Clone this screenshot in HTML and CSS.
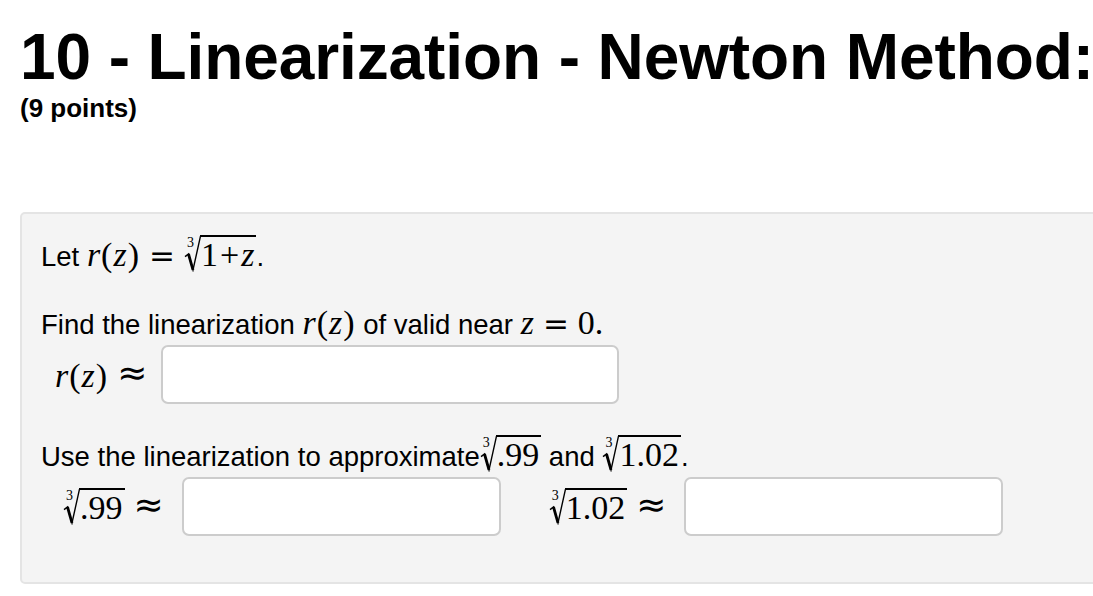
FILE: index.html
```html
<!DOCTYPE html>
<html lang="en">
<head>
    <meta charset="UTF-8">
    <meta name="viewport" content="width=device-width, initial-scale=1.0">
    <title>10 - Linearization - Newton Method</title>
    <link rel="stylesheet" href="styles.css">
</head>
<body>
    <div class="page">
        <h1 class="title">10 - Linearization - Newton Method:</h1>
        <div class="points">(9 points)</div>

        <div class="problem">
            <p class="q-text">Let <span class="math"><i>r</i><span class="paren">(</span><i>z</i><span class="paren">)</span><span class="rel">=</span><span class="root"><span class="root-idx">3</span><svg class="root-sign" viewBox="0 0 17 35" preserveAspectRatio="none"><path d="M1 20.5 L4.5 18 L9 33 L16.5 1" fill="none" stroke="#000" stroke-width="1.4"/><path d="M4.5 18 L9 33" fill="none" stroke="#000" stroke-width="2.8"/></svg><span class="root-body">1<span class="op">+</span><i>z</i></span></span></span>.</p>

            <p class="q-text q-gap">Find the linearization <span class="math"><i>r</i><span class="paren">(</span><i>z</i><span class="paren">)</span></span> of valid near <span class="math"><i>z</i><span class="rel">=</span>0.</span></p>
            <div class="answer-row row-one">
                <span class="math label label-r"><i>r</i><span class="paren">(</span><i>z</i><span class="paren">)</span><span class="approx">≈</span></span>
                <input type="text" class="answer wide">
            </div>

            <p class="q-text q-gap-lg">Use the linearization to approximate<span class="math"><span class="root"><span class="root-idx">3</span><svg class="root-sign" viewBox="0 0 17 35" preserveAspectRatio="none"><path d="M1 20.5 L4.5 18 L9 33 L16.5 1" fill="none" stroke="#000" stroke-width="1.4"/><path d="M4.5 18 L9 33" fill="none" stroke="#000" stroke-width="2.8"/></svg><span class="root-body">.99</span></span></span> and <span class="math"><span class="root"><span class="root-idx">3</span><svg class="root-sign" viewBox="0 0 17 35" preserveAspectRatio="none"><path d="M1 20.5 L4.5 18 L9 33 L16.5 1" fill="none" stroke="#000" stroke-width="1.4"/><path d="M4.5 18 L9 33" fill="none" stroke="#000" stroke-width="2.8"/></svg><span class="root-body">1.02</span></span></span>.</p>
            <div class="answer-row row-two">
                <span class="math label label-first"><span class="root"><span class="root-idx">3</span><svg class="root-sign" viewBox="0 0 17 35" preserveAspectRatio="none"><path d="M1 20.5 L4.5 18 L9 33 L16.5 1" fill="none" stroke="#000" stroke-width="1.4"/><path d="M4.5 18 L9 33" fill="none" stroke="#000" stroke-width="2.8"/></svg><span class="root-body">.99</span></span><span class="approx">≈</span></span>
                <input type="text" class="answer narrow">
                <span class="math label label-second"><span class="root"><span class="root-idx">3</span><svg class="root-sign" viewBox="0 0 17 35" preserveAspectRatio="none"><path d="M1 20.5 L4.5 18 L9 33 L16.5 1" fill="none" stroke="#000" stroke-width="1.4"/><path d="M4.5 18 L9 33" fill="none" stroke="#000" stroke-width="2.8"/></svg><span class="root-body">1.02</span></span><span class="approx">≈</span></span>
                <input type="text" class="answer narrow">
            </div>
        </div>
    </div>
</body>
</html>
```

FILE: styles.css
```css
body {
    margin: 0;
    padding: 0;
    background-color: #fff;
    color: #000;
    font-family: "Liberation Sans", Arial, sans-serif;
    overflow: hidden;
}
.page {
    padding: 25px 0 0 20px;
}
.title {
    margin: 0;
    font-size: 64px;
    line-height: 64px;
    font-weight: bold;
    letter-spacing: -0.1px;
    white-space: nowrap;
}
.points {
    margin-top: 6px;
    font-size: 26px;
    line-height: 26px;
    font-weight: bold;
}
.problem {
    margin-top: 91px;
    margin-right: -20px;
    padding: 21px 19px 46px;
    background-color: #f4f4f4;
    border: 2px solid #e4e4e4;
    border-radius: 5px;
}
.q-text {
    margin: 0;
    font-size: 27.5px;
    line-height: 40px;
    white-space: nowrap;
}
.q-gap {
    margin-top: 28px;
}
.q-gap-lg {
    margin-top: 31px;
}
.math {
    font-family: "Liberation Serif", "Times New Roman", serif;
    font-size: 34px;
    line-height: 1;
}
.math i {
    font-style: italic;
}
.paren {
    margin: 0 1px;
}
.op {
    margin: 0 2px;
}
.rel,
.approx {
    font-family: "DejaVu Sans", sans-serif;
    font-size: 31px;
}
.rel {
    margin: 0 9px;
}
.approx {
    display: inline-block;
    margin-left: 9px;
    font-size: 36px;
    transform: translateY(-2px);
}
.root {
    display: inline-block;
    position: relative;
    padding-left: 16px;
    line-height: 1;
}
.root-idx {
    position: absolute;
    left: 3px;
    top: 1px;
    font-size: 14px;
    line-height: 1;
}
.root-sign {
    position: absolute;
    left: 0;
    top: 0;
    width: 17px;
    height: 100%;
}
.root-body {
    display: inline-block;
    padding: 1px 2px 0 1px;
    border-top: 2px solid #000;
    line-height: 1;
}
.answer-row {
    display: flex;
    align-items: center;
}
.row-one {
    padding-left: 14px;
}
.row-two {
    padding-left: 22px;
}
.label {
    white-space: nowrap;
}
.answer {
    height: 59px;
    box-sizing: border-box;
    margin: 0;
    padding: 0 12px;
    background-color: #fff;
    border: 2px solid #cccccc;
    border-radius: 7px;
    font-size: 20px;
}
.wide {
    width: 458px;
    margin-left: 14px;
}
.narrow {
    width: 319px;
    margin-left: 18px;
}
.label-second {
    margin-left: 48px;
}
.label-second + .narrow {
    margin-left: 18px;
}
```
